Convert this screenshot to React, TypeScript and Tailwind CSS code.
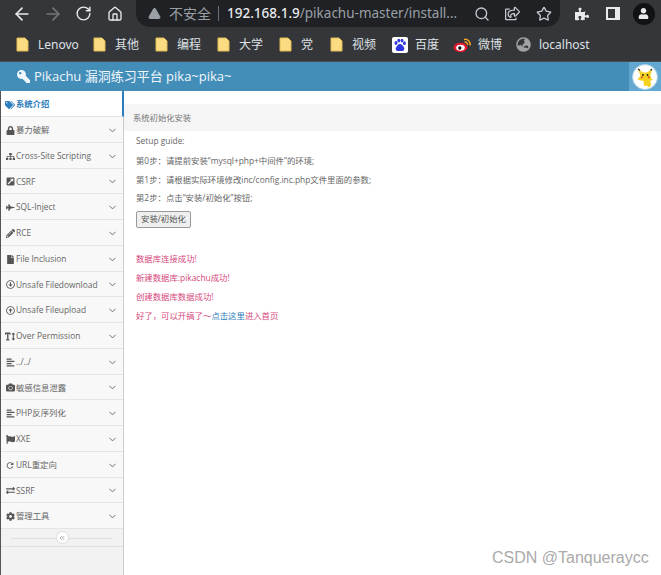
import React from "react";
import { ArrowLeft, ArrowRight, ChevronDown, House, RotateCw, Search, Star, TriangleAlert, ChevronsLeft } from "lucide-react";
import {
  FaCamera,
  FaCog,
  FaExternalLinkSquareAlt,
  FaFile,
  FaFlag,
  FaGlobeAsia,
  FaKey,
  FaLock,
  FaPencilAlt,
  FaPuzzlePiece,
  FaRegArrowAltCircleDown,
  FaRegArrowAltCircleUp,
  FaRegShareSquare,
  FaTags,
  FaUser,
  FaExchangeAlt,
  FaAlignLeft,
  FaSitemap,
  FaFighterJet,
  FaTextHeight,
} from "react-icons/fa";
import { MdRefresh } from "react-icons/md";

const ui = "font-['Noto_Sans','Noto_Sans_CJK_SC',sans-serif]";
const page = "font-['Open_Sans','Noto_Sans_CJK_SC',sans-serif]";

const Folder = () => (
  <svg width="13" height="15" viewBox="0 0 13 15" className="shrink-0">
    <path d="M1 1h8l3 3v10H1z" fill="#fbdc83" stroke="#e0bb55" strokeWidth="1" />
  </svg>
);

const Baidu = () => (
  <svg width="16" height="16" viewBox="0 0 16 16" className="shrink-0">
    <rect width="16" height="16" rx="2" fill="#fff" />
    <g fill="#2f35e0">
      <ellipse cx="4" cy="6" rx="1.5" ry="2" />
      <ellipse cx="6.8" cy="3.6" rx="1.4" ry="1.9" />
      <ellipse cx="10" cy="3.6" rx="1.4" ry="1.9" />
      <ellipse cx="12.4" cy="6.2" rx="1.4" ry="1.9" />
      <path d="M8 7c2 0 3 2 4 3.500 1 2-.5 3.500-2 3.500H6c-1.500 0-3-1.500-2-3.500C5 9 6 7 8 7z" />
    </g>
  </svg>
);

const Weibo = () => (
  <svg width="19" height="16" viewBox="0 0 19 16" className="shrink-0">
    <ellipse cx="7.500" cy="10.500" rx="7" ry="4.700" fill="#e6162d" />
    <ellipse cx="7.500" cy="10.800" rx="4.300" ry="3" fill="#fff" />
    <circle cx="6.800" cy="11" r="1.700" fill="#111" />
    <path d="M11 2.500a5 5 0 0 1 6 6M11.500 5a2.500 2.500 0 0 1 3 3" fill="none" stroke="#f5a623" strokeWidth="1.500" />
  </svg>
);

const Pikachu = () => (
  <svg width="26" height="26" viewBox="0 0 26 26">
    <circle cx="13" cy="13" r="12.500" fill="#fff" stroke="#a9d0e6" />
    <path d="M6 5l5 3.500h4L20 5l-1.500 6 .5 3 2 2-2.500.5.500 5-2 2-2.500-2-2.500.5-.5-5-4.500-1-1.500-1L8.500 12z" fill="#f5d21f" />
    <path d="M6 5l2 1.500M20 5l-1.500 1.500" stroke="#333" strokeWidth="1.300" />
    <circle cx="11" cy="11" r=".9" fill="#222" />
    <circle cx="15.500" cy="11" r=".9" fill="#222" />
    <circle cx="9.800" cy="13.300" r="1.100" fill="#e0522c" />
    <circle cx="16.800" cy="13.300" r="1.100" fill="#e0522c" />
  </svg>
);

const bookmarks = [
  { label: "Lenovo", icon: <Folder />, gap: "gap-[9px]", w: "w-[77px]" },
  { label: "其他", icon: <Folder />, gap: "gap-[9px]", w: "w-[62px]" },
  { label: "编程", icon: <Folder />, gap: "gap-[9px]", w: "w-[62px]" },
  { label: "大学", icon: <Folder />, gap: "gap-[9px]", w: "w-[62px]" },
  { label: "党", icon: <Folder />, gap: "gap-[9px]", w: "w-[51px]" },
  { label: "视频", icon: <Folder />, gap: "gap-[9px]", w: "w-[62px]" },
  { label: "百度", icon: <Baidu />, gap: "gap-[7px]", w: "w-[61px]" },
  { label: "微博", icon: <Weibo />, gap: "gap-[6px]", w: "w-[63px]" },
  { label: "localhost", icon: <FaGlobeAsia className="text-[15px] text-[#a0a2a5] shrink-0" />, gap: "gap-[8px]", w: "w-[90px]" },
];

const menu = [
  { label: "暴力破解", icon: <FaLock className="text-[9px]" /> },
  { label: "Cross-Site Scripting", icon: <FaSitemap className="text-[9px]" /> },
  { label: "CSRF", icon: <FaExternalLinkSquareAlt className="text-[9px]" /> },
  { label: "SQL-Inject", icon: <FaFighterJet className="text-[9px]" /> },
  { label: "RCE", icon: <FaPencilAlt className="text-[9px]" /> },
  { label: "File Inclusion", icon: <FaFile className="text-[9px]" /> },
  { label: "Unsafe Filedownload", icon: <FaRegArrowAltCircleDown className="text-[9px]" /> },
  { label: "Unsafe Fileupload", icon: <FaRegArrowAltCircleUp className="text-[9px]" /> },
  { label: "Over Permission", icon: <FaTextHeight className="text-[11px]" /> },
  { label: "../../", icon: <FaAlignLeft className="text-[9px]" /> },
  { label: "敏感信息泄露", icon: <FaCamera className="text-[9px]" /> },
  { label: "PHP反序列化", icon: <FaAlignLeft className="text-[9px]" /> },
  { label: "XXE", icon: <FaFlag className="text-[9px]" /> },
  { label: "URL重定向", icon: <MdRefresh className="text-[13px]" /> },
  { label: "SSRF", icon: <FaExchangeAlt className="text-[9px]" /> },
  { label: "管理工具", icon: <FaCog className="text-[9px]" /> },
];

const Tool = ({ children }: { children: React.ReactNode }) => (
  <div className="w-[31px] h-full flex items-center justify-center shrink-0">{children}</div>
);

const BrowserBar = () => (
  <div className={`bg-[#35363a] h-[62px] border-b border-[#4a4d52] ${ui}`}>
    <div className="flex items-center h-[27px]">
      <div className="flex items-center h-full pl-[6px] w-[136px] text-[#e8eaed]">
        <Tool><ArrowLeft size={20} /></Tool>
        <Tool><ArrowRight size={20} className="text-[#74767a]" /></Tool>
        <Tool><RotateCw size={17} /></Tool>
        <Tool><House size={16} /></Tool>
      </div>
      <div className="flex items-center h-[27px] w-[424px] bg-[#202124] rounded-bl-[14px] rounded-br-[14px] pl-[12px] pr-[1px]">
        <TriangleAlert size={13} className="text-[#9aa0a6] fill-[#9aa0a6] stroke-[#9aa0a6] shrink-0" />
        <span className="text-[14px] text-[#9aa0a6] ml-[8px] whitespace-nowrap">不安全</span>
        <span className="w-px h-[15px] bg-[#6b6e72] mx-[7px]" />
        <span className="text-[13.500px] font-medium text-[#e8eaed] whitespace-nowrap ml-px">
          192.168.1.9<span className="font-normal text-[#9aa0a6]">/pikachu-master/install...</span>
        </span>
        <div className="flex items-center h-full ml-auto text-[#c5c8cc]">
          <Tool><Search size={16} /></Tool>
          <Tool><FaRegShareSquare className="text-[15px]" /></Tool>
          <Tool><Star size={16} /></Tool>
        </div>
      </div>
      <div className="flex items-center h-full text-[#e8eaed] pl-[6px] flex-1">
        <Tool><FaPuzzlePiece className="text-[14px]" /></Tool>
        <Tool><div className="w-[14px] h-[13px] border-2 border-[#e8eaed] border-r-[5px]" /></Tool>
        <Tool>
          <div className="w-[22px] h-[22px] rounded-full bg-[#111214] flex items-center justify-center">
            <FaUser className="text-[11px]" />
          </div>
        </Tool>
      </div>
    </div>
    <div className="flex items-center h-[34px] pl-[16px] pt-px">
      {bookmarks.map((b) => (
        <div key={b.label} className={`flex items-center shrink-0 ${b.gap} ${b.w}`}>
          {b.icon}
          <span className="text-[12px] text-[#dee1e5] whitespace-nowrap">{b.label}</span>
        </div>
      ))}
    </div>
  </div>
);

const Sidebar = () => (
  <aside className={`w-[124px] shrink-0 bg-[#f2f2f2] border-l border-[#555] border-r border-r-[#cccccc] flex flex-col ${page}`}>
    <div className="h-[26px] pt-[2px] bg-white border-b border-[#e5e5e5] border-r-2 border-r-[#2b7dbc] -mr-px flex items-center pl-[4px] gap-px text-[8.300px] font-semibold text-[#2b7dbc]">
      <FaTags className="text-[10px]" />
      系统介绍
    </div>
    {menu.map((m) => (
      <div
        key={m.label}
        className="h-[25.75px] pt-[2px] bg-[#f8f8f8] border-b border-[#e5e5e5] flex items-center pl-[4px] pr-[5px] text-[8.400px] text-[#666]"
      >
        <span className="w-[10px] flex justify-center text-[#555] shrink-0 mr-px">{m.icon}</span>
        <span className="flex-1 whitespace-nowrap">{m.label}</span>
        <ChevronDown size={11} className="text-[#666] shrink-0" />
      </div>
    ))}
    <div className="h-[18px] border-b border-[#e0e0e0] flex items-center justify-center relative">
      <div className="absolute left-[10px] right-[10px] top-[9px] h-px bg-[#e0e0e0]" />
      <div className="relative w-[13px] h-[13px] rounded-full bg-white border border-[#ddd] flex items-center justify-center text-[#888]">
        <ChevronsLeft size={8} />
      </div>
    </div>
  </aside>
);

const Content = () => (
  <main className={`flex-1 bg-white text-[8.400px] text-[#666] ${page}`}>
    <div className="h-[13px]" />
    <div className="h-[27px] bg-[#f5f5f5] pl-[9px] pt-px flex items-center text-[8.300px] text-[#777]">系统初始化安装</div>
    <div className="pl-[12px] pt-[1px] flex flex-col">
      <p className="h-[19px] flex items-center">Setup guide:</p>
      <p className="h-[19px] pt-[2px] flex items-center">第0步：请提前安装“mysql+php+中间件”的环境;</p>
      <p className="h-[19px] pt-[2px] flex items-center">第1步：请根据实际环境修改inc/config.inc.php文件里面的参数;</p>
      <p className="h-[19px] flex items-center">第2步：点击“安装/初始化”按钮;</p>
      <button className="mt-[3px] w-[55px] h-[17px] bg-[#efefef] border border-[#999] rounded-[2px] text-[#555] text-[8.400px]">
        安装/初始化
      </button>
      <div className="mt-[21px] flex flex-col text-[#d6487e] [&>p]:pt-[2px]">
        <p className="h-[19px] flex items-center">数据库连接成功!</p>
        <p className="h-[19px] flex items-center">新建数据库:pikachu成功!</p>
        <p className="h-[19px] flex items-center">创建数据库数据成功!</p>
        <p className="h-[19px] flex items-center">
          好了，可以开搞了～<span className="text-[#2b7dbc]">点击这里</span>进入首页
        </p>
      </div>
    </div>
  </main>
);

export default function App() {
  return (
    <div className="relative w-[661px] h-[575px] overflow-hidden flex flex-col bg-white">
      <BrowserBar />
      <header className={`h-[29px] bg-[#438eb9] flex items-center text-[#f0f6fa] ${page}`}>
        <FaKey className="text-[13px] ml-[17px] mr-[4px] -scale-x-100" />
        <span className="text-[13px]">Pikachu 漏洞练习平台 pika~pika~</span>
        <div className="ml-auto w-[32px] h-full bg-[#62a8d1] flex items-center justify-center">
          <Pikachu />
        </div>
      </header>
      <div className="flex flex-1 min-h-0">
        <Sidebar />
        <Content />
      </div>
      <span className="absolute left-[492px] top-[546px] text-[16px] text-[#aaaaaa] font-['Liberation_Sans',sans-serif]">
        CSDN @Tanqueraycc
      </span>
    </div>
  );
}
